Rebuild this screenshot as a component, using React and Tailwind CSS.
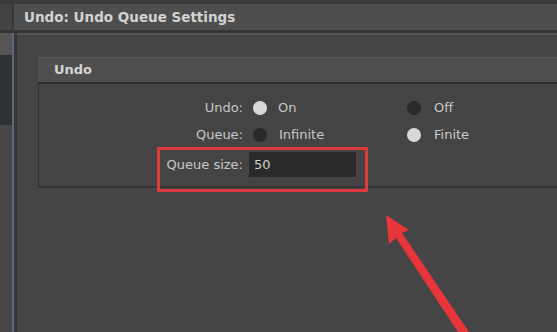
import React from "react";

const font = { fontFamily: '"DejaVu Sans", Verdana, sans-serif' };

function Radio({ on }) {
  return (
    <div
      className={
        "w-[14px] h-[14px] rounded-full shrink-0 " +
        (on ? "bg-[#d9d9d9]" : "bg-[#2a2a2a]")
      }
    />
  );
}

export default function App() {
  return (
    <div
      className="relative w-[557px] h-[332px] overflow-hidden bg-[#3f3f3f] flex flex-col text-[#c8c8c8]"
      style={font}
    >
      <div className="h-[4px] bg-[#3b3b3b] shrink-0" />
      <div className="flex h-[26px] shrink-0">
        <div className="w-[13px] bg-[#434343] border-r border-[#353535]" />
        <div className="flex-1 bg-[#4e4e4e] border-l border-[#3a3a3a] flex items-center pl-[10px] text-[13.5px] font-bold text-[#d2d2d2]">
          Undo: Undo Queue Settings
        </div>
      </div>
      <div className="h-[3px] bg-[#353535] shrink-0" />
      <div className="flex flex-1">
        <div className="w-[12px] flex flex-col">
          <div className="h-[22px] bg-[#555]" />
          <div className="h-[70px] bg-[#2f3134]" />
          <div className="flex-1 bg-[#474747]" />
        </div>
        <div className="w-[2px] bg-[#5a6878]" />
        <div className="w-[3px] bg-[#383838]" />
        <div className="flex-1 bg-[#454545] border-t-[2px] border-[#555] pt-[22px] pl-[21px]">
          <div className="flex flex-col">
            <div className="h-[25px] bg-[#4f4f4f] border-t border-[#5a5a5a] flex items-center pl-[16px] text-[13px] font-bold text-[#d4d4d4]">
              Undo
            </div>
            <div className="h-[2px] bg-[#2b2b2b]" />
            <div className="bg-[#444] border-l border-b-2 border-[#343434] pt-[10px] pb-[9px] text-[13px]">
              <div className="flex items-center h-[27px]">
                <div className="w-[204px] text-right">Undo:</div>
                <div className="ml-[10px]"><Radio on /></div>
                <div className="ml-[11px] w-[129px]">On</div>
                <Radio />
                <div className="ml-[13px]">Off</div>
              </div>
              <div className="flex items-center h-[27px]">
                <div className="w-[204px] text-right">Queue:</div>
                <div className="ml-[10px]"><Radio /></div>
                <div className="ml-[12px] w-[128px]">Infinite</div>
                <Radio on />
                <div className="ml-[13px]">Finite</div>
              </div>
              <div className="flex items-center h-[25px] mt-[4px]">
                <div className="w-[204px] text-right">Queue size:</div>
                <div className="ml-[6px] w-[107px] h-[25px] bg-[#2a2a2a] flex items-center pl-[5px] text-[#d0d0d0]">
                  50
                </div>
              </div>
            </div>
          </div>
        </div>
      </div>

      <div className="absolute left-[157px] top-[147px] w-[211px] h-[45px] border-[3px] border-[#dc3a3e]" />

      <svg className="absolute inset-0" width="557" height="332" viewBox="0 0 557 332">
        <polygon
          points="386,215 389,244 396,238 458,332 469,332 402,233 409,230"
          fill="#e8353b"
        />
      </svg>
    </div>
  );
}
